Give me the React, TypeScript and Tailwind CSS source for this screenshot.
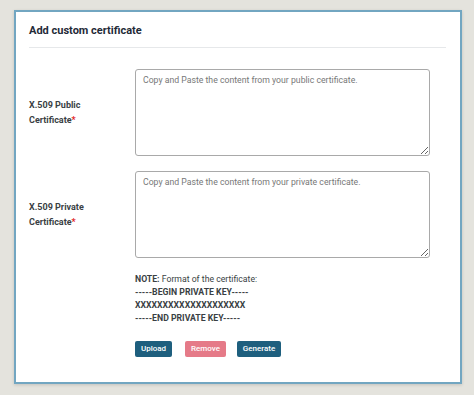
import React from 'react';

const fields = [
  { id: 'public', title: 'X.509 Public', hint: 'Copy and Paste the content from your public certificate.' },
  { id: 'private', title: 'X.509 Private', hint: 'Copy and Paste the content from your private certificate.' },
];

const App: React.FC = () => {
  return (
    <div className="w-[474px] h-[395px] bg-[#e4e3dd] pt-[10px] pl-[14px] font-['Roboto',sans-serif]">
      <div className="w-[448px] h-[374px] bg-white border-2 border-[#72a6c1] shadow-[0_1px_3px_rgba(0,0,0,0.15)] pl-[13px] pr-[14px] pt-[11px]">
        <h2 className="text-[11px] leading-[16px] font-bold text-[#1f2a37]">Add custom certificate</h2>
        <div className="mt-[8px] border-b border-[#e6e8ea]" />

        <div className="mt-[21px] flex flex-col gap-[15px]">
          {fields.map((f) => (
            <div key={f.id} className="flex items-center">
              <label className="w-[106px] text-[9px] leading-[15px] font-bold text-[#3a3f44]">
                {f.title}
                <br />
                Certificate<span className="text-[#e02424]">*</span>
              </label>
              <textarea
                placeholder={f.hint}
                className="w-[295px] h-[87px] rounded-[3px] border border-[#a9a9a9] px-[7px] py-[4px] text-[8.7px] leading-[13px] text-[#333] placeholder:text-[#777] outline-none"
              />
            </div>
          ))}
        </div>

        <div className="ml-[106px] mt-[15px] text-[8.7px] leading-[13px] text-[#3a3f44]">
          <p><span className="font-bold">NOTE:</span> Format of the certificate:</p>
          <p className="font-bold">-----BEGIN PRIVATE KEY-----</p>
          <p className="font-bold">XXXXXXXXXXXXXXXXXXXX</p>
          <p className="font-bold">-----END PRIVATE KEY-----</p>
        </div>

        <div className="ml-[106px] mt-[16px] flex text-[8px] leading-[16px] font-medium text-white">
          <button className="w-[37px] h-[16px] rounded-[2px] bg-[#1e5f7e]">Upload</button>
          <button className="ml-[13px] w-[41px] h-[16px] rounded-[2px] bg-[#e57a88]">Remove</button>
          <button className="ml-[11px] w-[44px] h-[16px] rounded-[2px] bg-[#1e5f7e]">Generate</button>
        </div>
      </div>
    </div>
  );
};

export default App;
